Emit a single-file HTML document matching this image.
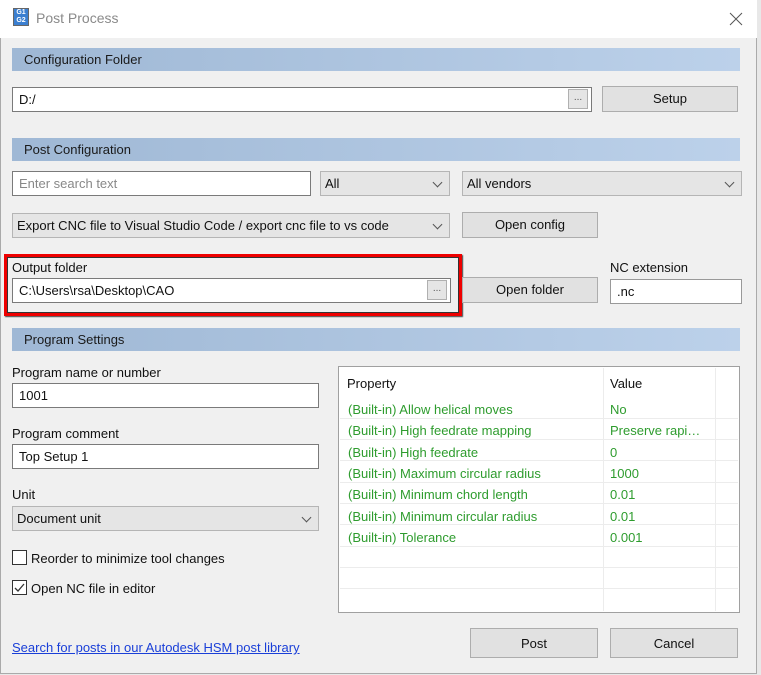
<!DOCTYPE html>
<html><head><meta charset="utf-8"><style>
*{box-sizing:border-box;margin:0;padding:0}
body{width:761px;height:675px;background:#e8e8e8;font-family:"Liberation Sans",sans-serif;font-size:13px;color:#111;position:relative;overflow:hidden}
.a{position:absolute}
.dlg{left:0;top:0;width:757px;height:674px;background:#f0f0f0;border:1px solid #aaa;border-top:none}
.title{left:0;top:0;width:757px;height:38px;background:#fff}
.hdr{height:23px;background:linear-gradient(to right,#9fb8d5,#bcd1ea);padding-left:12px;line-height:24px;font-size:13px;color:#1a1a1a}
.inp{background:#fff;border:1px solid #7a7a7a;padding-left:6px;line-height:23px;height:25px}
.btn{background:#e1e1e1;border:1px solid #adadad;text-align:center;line-height:24px;font-size:13px}
.sel{background:#e5e5e5;border:1px solid #b5b5b5;padding-left:4px;line-height:24px;height:25px}
.sel:after{content:"";position:absolute;right:8px;top:7px;width:6px;height:6px;border-right:1px solid #555;border-bottom:1px solid #555;transform:rotate(45deg)}
.dots{background:#e5e5e5;border:1px solid #b0b0b0;width:20px;height:20px;font-size:10px;text-align:center;line-height:16px;color:#555}
.g{color:#2e9c2e}
.row{left:340px;width:398px;height:21px;border-bottom:1px solid #ececec}
</style></head><body>
<div class="a dlg"></div>
<div class="a title"></div>
<div class="a" style="left:13px;top:8px;width:16px;height:18px;background:#3b7fd0;border:1px solid #666;color:#fff;font-size:7px;line-height:8px;text-align:center;font-weight:bold">G1<br>G2</div>
<div class="a" style="left:36px;top:10px;font-size:14px;color:#8a8a8a">Post Process</div>
<svg class="a" style="left:729px;top:12px" width="14" height="14"><path d="M1 1L13 13M13 1L1 13" stroke="#555" stroke-width="1"/></svg>

<div class="a hdr" style="left:12px;top:48px;width:728px">Configuration Folder</div>
<div class="a inp" style="left:12px;top:87px;width:580px">D:/</div>
<div class="a dots" style="left:568px;top:89px">...</div>
<div class="a btn" style="left:602px;top:86px;width:136px;height:26px">Setup</div>

<div class="a hdr" style="left:12px;top:138px;width:728px">Post Configuration</div>
<div class="a inp" style="left:12px;top:171px;width:299px;color:#888">Enter search text</div>
<div class="a sel" style="left:320px;top:171px;width:130px">All</div>
<div class="a sel" style="left:462px;top:171px;width:280px">All vendors</div>
<div class="a sel" style="left:12px;top:213px;width:438px">Export CNC file to Visual Studio Code / export cnc file to vs code</div>
<div class="a btn" style="left:462px;top:212px;width:136px;height:26px">Open config</div>

<div class="a" style="left:4px;top:254px;width:458px;height:62px;border:3px solid #e00;box-shadow:inset 0 0 0 1px #333,1px 1px 1px #444"></div>
<div class="a" style="left:12px;top:260px">Output folder</div>
<div class="a inp" style="left:12px;top:278px;width:439px">C:\Users\rsa\Desktop\CAO</div>
<div class="a dots" style="left:427px;top:280px">...</div>
<div class="a btn" style="left:462px;top:277px;width:136px;height:26px">Open folder</div>
<div class="a" style="left:610px;top:260px">NC extension</div>
<div class="a inp" style="left:610px;top:279px;width:132px;border-color:#999">.nc</div>

<div class="a hdr" style="left:12px;top:328px;width:728px">Program Settings</div>
<div class="a" style="left:12px;top:365px">Program name or number</div>
<div class="a inp" style="left:12px;top:383px;width:307px">1001</div>
<div class="a" style="left:12px;top:426px">Program comment</div>
<div class="a inp" style="left:12px;top:444px;width:307px">Top Setup 1</div>
<div class="a" style="left:12px;top:487px">Unit</div>
<div class="a sel" style="left:12px;top:506px;width:307px">Document unit</div>
<div class="a" style="left:12px;top:550px;width:15px;height:15px;border:1px solid #333;background:#fff"></div>
<div class="a" style="left:31px;top:551px">Reorder to minimize tool changes</div>
<div class="a" style="left:12px;top:580px;width:15px;height:15px;border:1px solid #333;background:#fff"></div>
<svg class="a" style="left:13px;top:581px" width="13" height="13"><path d="M2 7L5 10L11 3" stroke="#333" stroke-width="1.3" fill="none"/></svg>
<div class="a" style="left:31px;top:581px">Open NC file in editor</div>
<div class="a" style="left:12px;top:640px;color:#1a3fd8;text-decoration:underline">Search for posts in our Autodesk HSM post library</div>

<div class="a" style="left:338px;top:366px;width:402px;height:247px;background:#fff;border:1px solid #a0a0a0"></div>
<div class="a" style="left:603px;top:368px;width:1px;height:243px;background:#ececec"></div>
<div class="a" style="left:715px;top:368px;width:1px;height:243px;background:#ececec"></div>
<div class="a" style="left:347px;top:376px">Property</div>
<div class="a" style="left:610px;top:376px">Value</div>
<div class="a row" style="top:398px"></div>
<div class="a row" style="top:419px"></div>
<div class="a row" style="top:440px"></div>
<div class="a row" style="top:462px"></div>
<div class="a row" style="top:483px"></div>
<div class="a row" style="top:504px"></div>
<div class="a row" style="top:526px"></div>
<div class="a row" style="top:547px"></div>
<div class="a row" style="top:568px"></div>
<div class="a g" style="left:348px;top:402px">(Built-in) Allow helical moves</div><div class="a g" style="left:610px;top:402px">No</div>
<div class="a g" style="left:348px;top:423px">(Built-in) High feedrate mapping</div><div class="a g" style="left:610px;top:423px">Preserve rapi…</div>
<div class="a g" style="left:348px;top:445px">(Built-in) High feedrate</div><div class="a g" style="left:610px;top:445px">0</div>
<div class="a g" style="left:348px;top:466px">(Built-in) Maximum circular radius</div><div class="a g" style="left:610px;top:466px">1000</div>
<div class="a g" style="left:348px;top:487px">(Built-in) Minimum chord length</div><div class="a g" style="left:610px;top:487px">0.01</div>
<div class="a g" style="left:348px;top:509px">(Built-in) Minimum circular radius</div><div class="a g" style="left:610px;top:509px">0.01</div>
<div class="a g" style="left:348px;top:530px">(Built-in) Tolerance</div><div class="a g" style="left:610px;top:530px">0.001</div>

<div class="a btn" style="left:470px;top:628px;width:128px;height:30px;line-height:29px">Post</div>
<div class="a btn" style="left:610px;top:628px;width:128px;height:30px;line-height:29px">Cancel</div>
</body></html>
